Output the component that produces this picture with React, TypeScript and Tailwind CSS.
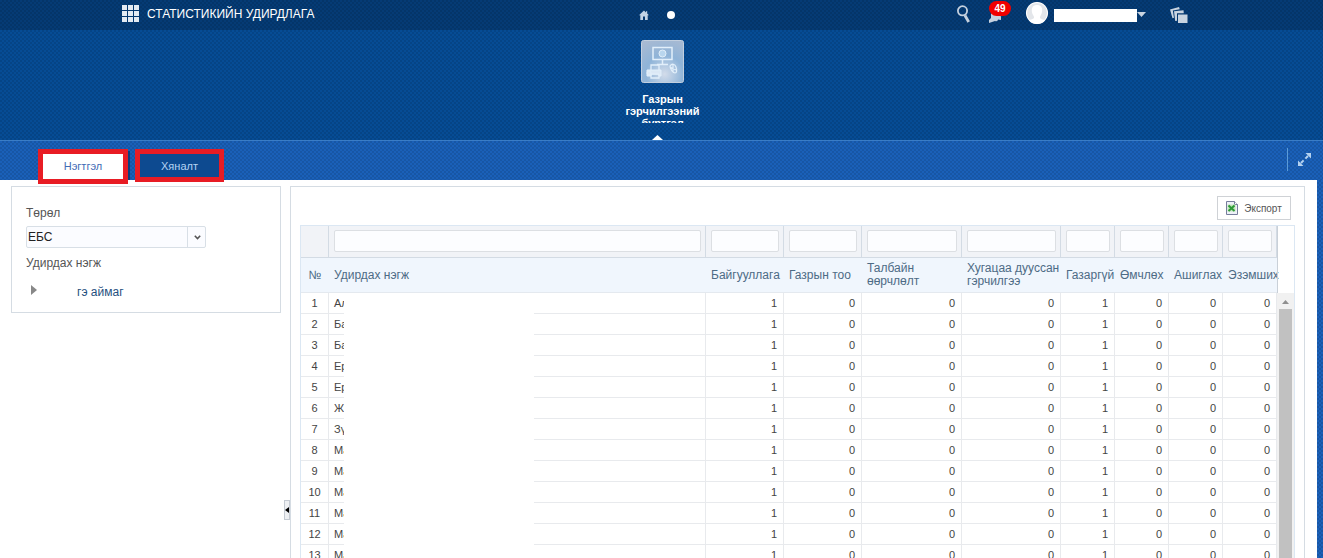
interface Column {
  label: string
  width: string
  value: string
}

const columns: Column[] = [
  { label: 'Байгууллага', width: 'w-[78px]', value: '1' },
  { label: 'Газрын тоо', width: 'w-[78px]', value: '0' },
  { label: 'Талбайн өөрчлөлт', width: 'w-[100px]', value: '0' },
  { label: 'Хугацаа дууссан гэрчилгээ', width: 'w-[99px]', value: '0' },
  { label: 'Газаргүй', width: 'w-[54px]', value: '1' },
  { label: 'Өмчлөх', width: 'w-[54px]', value: '0' },
  { label: 'Ашиглах', width: 'w-[54px]', value: '0' },
  { label: 'Эзэмших', width: 'w-[54px]', value: '0' },
]

const names = ['Ал', 'Ба', 'Ба', 'Ер', 'Ер', 'Жа', 'Зү', 'Ма', 'Ма', 'Ма', 'Ма', 'Ма', 'Ма']

const texture =
  'bg-[repeating-conic-gradient(rgba(0,0,0,0.10)_0_25%,transparent_0_50%)] bg-[length:4px_4px]'

function GridIcon() {
  return (
    <svg width="17" height="17" viewBox="0 0 17 17" fill="#e4ebf3">
      {[0, 6, 12].map(y => [0, 6, 12].map(x => (
        <rect key={`${x}-${y}`} x={x} y={y} width="5" height="5" />
      )))}
    </svg>
  )
}

function HomeIcon() {
  return (
    <svg width="10" height="10" viewBox="0 0 10 10" fill="#c3d3e5">
      <path d="M5 0.5 0 5.2h1.3V10H4V6.6h2V10h2.7V5.2H10L8.2 3.5V1.2H7v1.2z" />
    </svg>
  )
}

function SearchIcon() {
  return (
    <svg width="15" height="19" viewBox="0 0 15 19" fill="none" stroke="#c5d1df">
      <circle cx="6.5" cy="5.8" r="4.6" strokeWidth="1.8" />
      <path d="M9 10.5 12.7 17" strokeWidth="2.8" />
    </svg>
  )
}

function BellIcon() {
  return (
    <svg width="15" height="17" viewBox="0 0 15 17" fill="#c5d1df">
      <path d="M2 4 9 1l3 10v3l-3-.5A2 2 0 0 1 6 15L0 17v-3l2-2z" />
    </svg>
  )
}

function AvatarIcon() {
  return (
    <svg width="22" height="22" viewBox="0 0 22 22">
      <clipPath id="avatar"><circle cx="11" cy="11" r="11" /></clipPath>
      <g clipPath="url(#avatar)">
        <rect width="22" height="22" fill="#e3e6ea" />
        <path d="M0 22c1-4 5-4 7.5-5.5 1-1 .5-2-.5-3.5C5 9 5 3 11 3s6 6 4 10c-1 1.5-1.5 2.5-.5 3.5C17 18 21 18 22 22z" fill="#fff" />
        <circle cx="11" cy="11" r="10.5" fill="none" stroke="#fff" />
      </g>
    </svg>
  )
}

function StackIcon() {
  return (
    <svg width="18" height="17" viewBox="0 0 18 17" fill="#c9d4e0">
      <path d="M8 7.5h9.5V16H8z" />
      <path d="M4 4.2 13.5 3.2l.3 3H7v7.6l-1.8.2z" />
      <path d="M0 2.5 9 0l.8 2.200L2.800 3.400 4 10.800l-1.500.4z" />
    </svg>
  )
}

function ModuleIcon() {
  return (
    <svg width="43" height="43" viewBox="0 0 43 43">
      <defs>
        <radialGradient id="module" cx="0.55" cy="0.8" r="0.9">
          <stop offset="0" stopColor="#d3dcea" />
          <stop offset="0.5" stopColor="#8fb4d8" />
          <stop offset="1" stopColor="#a9bad2" />
        </radialGradient>
      </defs>
      <rect x="0.5" y="0.5" width="42" height="42" rx="2" fill="url(#module)" stroke="#c2cfdf" />
      <g fill="none" stroke="#e2effa">
        <rect x="12" y="7.5" width="19" height="12" strokeWidth="1.5" />
        <circle cx="21.5" cy="13.5" r="3.5" fill="#b9d6ee" />
        <path d="M21.5 20v4M16 24.5h11" strokeWidth="1.5" />
        <path d="M10 30v-5h8v5M10 34h8v4h-8z" strokeWidth="1.3" />
        <path d="M6 30h14v6h-2v-2h-8v2H6z" fill="#dbe8f5" />
        <circle cx="8" cy="33" r="2" />
        <path d="M29 26c2-3 5-2 6 1s1 6-1 6-5-4-5-7zM29 27l6 3M32 24v8" strokeWidth="1.2" />
      </g>
    </svg>
  )
}

function ExpandIcon() {
  return (
    <svg width="13" height="13" viewBox="0 0 13 13" fill="#b4d2f0">
      <path d="M3 10 5.6 7.400M7.400 5.600 10 3" strokeWidth="2" stroke="#b4d2f0" />
      <path d="M7.500 0H13v5.500zM0 7.500V13h5.500z" />
    </svg>
  )
}

function ExcelIcon() {
  return (
    <svg width="12" height="14" viewBox="0 0 12 14">
      <path d="M.5.5h8l3 3v10H.5z" fill="#eef1f8" stroke="#767d9c" />
      <path d="M8.5.5v3h3" fill="#fff" stroke="#767d9c" />
      <rect x="1.5" y="3.5" width="8" height="7" fill="#c6e6bf" />
      <path d="M2.5 4.5 8.5 10M8.5 4.500 2.5 10" stroke="#2c9a38" strokeWidth="2" />
    </svg>
  )
}

function FilterCell({ label }: { label?: string }) {
  return (
    <td className="border-r border-b border-[#d3dbe4] bg-[#f1f3f7] pt-1 pr-1 pb-1 pl-[5px] align-top">
      {label && (
        <input
          aria-label={label}
          className="block h-[22px] w-full rounded-xs border border-[#dcdfe3] bg-[#fcfdff] px-1 text-[11px]"
        />
      )}
    </td>
  )
}

function Header() {
  return (
    <header className="bg-[#053b75]">
      <div className={`grid h-[30px] grid-cols-[1fr_auto_1fr] items-start ${texture}`}>
        <div className="flex gap-2 pt-[5px] pl-[122px]">
          <GridIcon />
          <h1 className="text-[12px] leading-[18px] text-white">СТАТИСТИКИЙН УДИРДЛАГА</h1>
        </div>
        <div className="flex items-center gap-[18px] pt-[10px] pr-[10px]">
          <a href="#" aria-label="Нүүр"><HomeIcon /></a>
          <span className="size-2 rounded-full bg-white" />
        </div>
        <div className="flex justify-end pr-[135px]">
          <button aria-label="Хайх" className="mt-1 mr-[18px]"><SearchIcon /></button>
          <button aria-label="Мэдэгдэл" className="relative mt-[5px] mr-[22px]">
            <BellIcon />
            <span className="absolute -top-1 left-0 h-[15px] w-[22px] rounded-full bg-[#f00000] text-center text-[10px] leading-[15px] font-bold text-white">49</span>
          </button>
          <div className="mt-[2px] flex">
            <AvatarIcon />
            <span className="mt-[7px] ml-[6px] h-[13px] w-[83px] bg-white" />
            <svg className="mt-[10px]" width="9" height="5" viewBox="0 0 9 5" fill="#c9d4e0"><path d="M0 0h9L4.5 5z" /></svg>
          </div>
          <button aria-label="Цонхнууд" className="mt-[6px] ml-6"><StackIcon /></button>
        </div>
      </div>
    </header>
  )
}

function ModuleBar() {
  return (
    <nav className="bg-[#064c95]">
      <div className={`flex h-[110px] flex-col items-center pt-[10px] ${texture}`}>
        <a href="#" className="flex flex-col items-center pl-[2px]">
          <ModuleIcon />
          <span className="mt-[10px] h-[30px] w-[84px] overflow-hidden text-center text-[11px] leading-3 font-bold text-white">
            Газрын гэрчилгээний бүртгэл
          </span>
        </a>
        <svg className="mt-3 mr-2" width="11" height="5" viewBox="0 0 11 5" fill="#fff"><path d="M0 5 5.5 0 11 5z" /></svg>
      </div>
    </nav>
  )
}

function TabBar() {
  return (
    <div className="bg-[#1a60b8]">
      <div className={`flex h-10 items-start border-t border-[#3b7dc6] pl-[38px] ${texture}`}>
        <button className="mt-2 h-[35px] w-[90px] border-[5px] border-[#e81c24] bg-white text-[11px] text-[#3f6bb5]">Нэгтгэл</button>
        <span className="mt-[10px] mr-[5px] h-[29px] w-[2px] bg-[#0b3e80]" />
        <button className="mt-2 h-[33px] w-[89px] border-[5px] border-[#e81c24] bg-[#0d4a90] pt-px text-[11px] text-[#b5d3f3]">Хяналт</button>
        <div className="mt-[7px] mr-3 ml-auto flex h-[23px] items-center border-l border-[#5b9bd8] pl-[10px]">
          <button aria-label="Дэлгэх"><ExpandIcon /></button>
        </div>
      </div>
    </div>
  )
}

function Sidebar() {
  return (
    <aside className="mt-[6px] ml-[11px] h-[127px] w-[270px] shrink-0 border border-[#d5dce3] px-[14px] pt-[18px] text-[12px] text-[#555]">
      <label htmlFor="type" className="block leading-4">Төрөл</label>
      <div className="relative mt-[5px] w-[180px]">
        <select id="type" className="block h-[22px] w-full appearance-none rounded-xs border border-[#d8dfe6] bg-[#fbfcff] pl-[1px] text-[12px] text-[#222]">
          <option>ЕБС</option>
        </select>
        <span className="pointer-events-none absolute inset-y-0 right-0 flex w-[19px] items-center justify-center border-l border-[#d8dfe6]">
          <svg width="7" height="5" viewBox="0 0 7 5" fill="none" stroke="#555" strokeWidth="1.6"><path d="m.8.8 2.7 2.7L6.2.8" /></svg>
        </span>
      </div>
      <div className="mt-[7px] leading-4">Удирдах нэгж</div>
      <div className="mt-[13px] flex h-4 items-center pl-[5px]">
        <button aria-label="Нээх" className="mb-1">
          <svg width="6" height="10" viewBox="0 0 6 10" fill="#888"><path d="M0 0v10l6-5z" /></svg>
        </button>
        <a href="#" className="ml-10 text-[#1f5080]">гэ аймаг</a>
      </div>
    </aside>
  )
}

function DataTable() {
  return (
    <div className="relative mt-[5px] flex border border-[#dbe7f3]">
      <table className="w-full table-fixed border-separate border-spacing-0 self-start text-[11px] text-[#444]">
        <colgroup>
          <col className="w-[28px]" />
          <col />
          {columns.map(column => <col key={column.label} className={column.width} />)}
        </colgroup>
        <thead>
          <tr className="h-8">
            <FilterCell />
            <FilterCell label="Удирдах нэгж" />
            {columns.map(column => <FilterCell key={column.label} label={column.label} />)}
          </tr>
          <tr className="h-[35px] bg-[#f0f6fd] text-left text-[12px] leading-[13px] text-[#4d6b85]">
            <th className="border-b border-[#e4e9ef] text-center font-normal">№</th>
            <th className="border-b border-[#e4e9ef] pl-[5px] font-normal">Удирдах нэгж</th>
            {columns.map(column => (
              <th key={column.label} className="border-b border-[#e4e9ef] pl-[5px] font-normal">{column.label}</th>
            ))}
          </tr>
        </thead>
        <tbody>
          {names.map((name, i) => (
            <tr key={i} className="h-[21px] leading-4">
              <td className="border-r border-b border-[#e8eaed] text-center">{i + 1}</td>
              <td className="border-r border-b border-[#e8eaed] pl-[5px]">{name}</td>
              {columns.map(column => (
                <td key={column.label} className="border-r border-b border-[#e8eaed] pr-[6px] text-right">{column.value}</td>
              ))}
            </tr>
          ))}
        </tbody>
      </table>
      {/* names are hidden past the first letters */}
      <div className="absolute top-[67px] bottom-0 left-[43px] w-[190px] bg-white" />
      <div className="flex w-[17px] shrink-0 flex-col">
        <div className="h-[67px] border-l border-[#c9d0d8]" />
        <div className="flex flex-1 flex-col items-center bg-[#f1f1f1]">
          <svg className="mt-[6px] mb-[5px]" width="7" height="5" viewBox="0 0 7 5" fill="#8f8f8f"><path d="M0 5 3.5 1 7 5z" /></svg>
          <div className="w-[13px] flex-1 bg-[#c1c1c1]" />
        </div>
      </div>
    </div>
  )
}

export default function App() {
  return (
    <div className="flex h-screen flex-col overflow-hidden bg-white font-['Liberation_Sans',Arial,sans-serif]">
      <Header />
      <ModuleBar />
      <TabBar />
      <main className="flex min-h-0 flex-1">
        <Sidebar />
        <div className="ml-[3px] flex w-[6px] shrink-0 items-end pb-[38px]">
          <button aria-label="Хураах" className="flex h-5 w-full items-center justify-center border border-[#c4cad2] bg-[#eef0f3]">
            <svg width="4" height="6" viewBox="0 0 4 6"><path d="M4 0v6L0 3z" /></svg>
          </button>
        </div>
        <section className="mt-[6px] mr-3 min-w-0 flex-1 border border-b-0 border-[#d5dce3] px-[9px] pt-[9px]">
          <div className="flex justify-end pr-1">
            <button className="flex h-6 w-[74px] items-center justify-center gap-[6px] border border-[#cfd2d6] text-[10px] text-[#555]">
              <ExcelIcon />
              Экспорт
            </button>
          </div>
          <DataTable />
        </section>
        <div className="w-[6px] shrink-0 bg-[#1a60b8]">
          <div className={`h-full ${texture}`} />
        </div>
      </main>
    </div>
  )
}
